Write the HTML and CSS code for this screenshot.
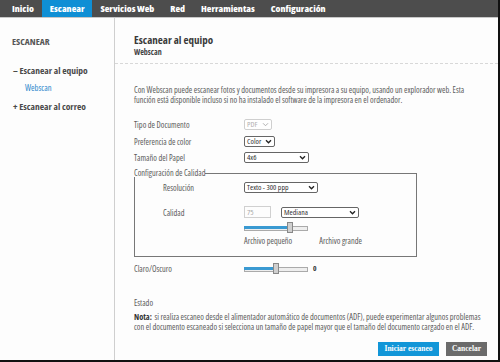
FILE: index.html
```html
<!DOCTYPE html>
<html lang="es">
<head>
<meta charset="utf-8">
<title>Webscan</title>
<link rel="stylesheet" href="styles.css">
</head>
<body>
<div class="frame">
  <nav class="topnav">
    <span class="tab">Inicio</span>
    <span class="tab active">Escanear</span>
    <span class="tab">Servicios Web</span>
    <span class="tab">Red</span>
    <span class="tab">Herramientas</span>
    <span class="tab">Configuración</span>
  </nav>
  <div class="body">
    <aside class="side">
      <div class="side-head">ESCANEAR</div>
      <div class="side-item first">– Escanear al equipo</div>
      <div class="side-sub">Webscan</div>
      <div class="side-item">+ Escanear al correo</div>
    </aside>
    <main class="main">
      <header class="page-head">
        <h1 class="title">Escanear al equipo</h1>
        <div class="subtitle">Webscan</div>
      </header>
      <div class="content">
        <p class="intro">Con Webscan puede escanear fotos y documentos desde su impresora a su equipo, usando un explorador web. Esta función está disponible incluso si no ha instalado el software de la impresora en el ordenador.</p>

        <div class="row r-tipo">
          <span class="label">Tipo de Documento</span>
          <span class="sel disabled w-pdf"><span class="val">PDF</span><svg class="chev" viewBox="0 0 8 6"><path d="M1 1.5 L4 4.5 L7 1.5" /></svg></span>
        </div>
        <div class="row r-color">
          <span class="label">Preferencia de color</span>
          <span class="sel w-color"><span class="val">Color</span><svg class="chev" viewBox="0 0 8 6"><path d="M1 1.5 L4 4.5 L7 1.5" /></svg></span>
        </div>
        <div class="row r-papel">
          <span class="label">Tamaño del Papel</span>
          <span class="sel w-papel"><span class="val">4x6</span><svg class="chev" viewBox="0 0 8 6"><path d="M1 1.5 L4 4.5 L7 1.5" /></svg></span>
        </div>

        <fieldset class="quality">
          <legend class="legend">Configuración de Calidad</legend>
          <div class="qrow q-res">
            <span class="qlabel">Resolución</span>
            <span class="sel w-res"><span class="val">Texto - 300 ppp</span><svg class="chev" viewBox="0 0 8 6"><path d="M1 1.5 L4 4.5 L7 1.5" /></svg></span>
          </div>
          <div class="qrow q-cal">
            <span class="qlabel">Calidad</span>
            <span class="num">75</span>
            <span class="sel w-med"><span class="val">Mediana</span><svg class="chev" viewBox="0 0 8 6"><path d="M1 1.5 L4 4.5 L7 1.5" /></svg></span>
          </div>
          <div class="qslider">
            <div class="slider">
              <span class="fill" style="width: 44px"></span>
              <span class="thumb" style="left: 43px"></span>
            </div>
            <div class="scale">
              <span>Archivo pequeño</span>
              <span>Archivo grande</span>
            </div>
          </div>
        </fieldset>

        <div class="row r-claro">
          <span class="label">Claro/Oscuro</span>
          <div class="slider">
            <span class="fill" style="width: 30px"></span>
            <span class="thumb" style="left: 29px"></span>
          </div>
          <span class="zero">0</span>
        </div>

        <div class="estado">Estado</div>
        <p class="note"><b class="note-key">Nota:</b> si realiza escaneo desde el alimentador automático de documentos (ADF), puede experimentar algunos problemas con el documento escaneado si selecciona un tamaño de papel mayor que el tamaño del documento cargado en el ADF.</p>

        <div class="actions">
          <span class="btn primary">Iniciar escaneo</span>
          <span class="btn secondary">Cancelar</span>
        </div>
      </div>
    </main>
  </div>
</div>
</body>
</html>
```

FILE: styles.css
```css
* { box-sizing: border-box; }
html, body { margin: 0; padding: 0; }
body {
  width: 500px;
  height: 362px;
  background: #fff;
  font-family: "Open Sans", "Liberation Sans", sans-serif;
  font-stretch: 75%;
  color: #5a5a5a;
  overflow: hidden;
}
.frame {
  width: 500px;
  height: 362px;
  border-right: 2px solid #111;
  border-bottom: 2px solid #111;
  display: flex;
  flex-direction: column;
  background: #fdfdfd;
}
.topnav {
  height: 18px;
  flex: none;
  background: #4d4d4d;
  border-bottom: 1px solid #c8c8c8;
  display: flex;
  padding-left: 4px;
}
.tab {
  padding: 0 8px;
  color: #fff;
  font-weight: 800;
  font-size: 9.5px;
  line-height: 17px;
  white-space: nowrap;
}
.tab.active { background: #0f8fd5; min-width: 50px; text-align: center; }

.body { flex: 1; display: flex; min-height: 0; }
.side {
  width: 115px;
  flex: none;
  border-right: 1px solid #cfcfcf;
  padding: 19px 0 0 12px;
}
.side-head {
  font-size: 9.5px;
  font-weight: 700;
  color: #555;
  line-height: 10px;
}
.side-item {
  font-size: 9.5px;
  font-weight: 700;
  color: #4a4a4a;
  line-height: 12px;
  white-space: nowrap;
  padding-left: 1px;
}
.side-item.first { margin-top: 18px; }
.side-sub {
  font-size: 8.5px;
  color: #2a86cc;
  padding-left: 13px;
  line-height: 10px;
  margin: 6px 0 8px;
}

.main { flex: 1; display: flex; flex-direction: column; min-width: 0; }
.page-head {
  padding: 15px 0 0 19px;
  height: 46px;
  flex: none;
  border-bottom: 1px dashed #d8d8d8;
}
.title {
  margin: 0;
  font-size: 11px;
  font-weight: 700;
  color: #3a3a3a;
  line-height: 14px;
}
.subtitle {
  font-size: 8px;
  font-weight: 700;
  color: #444;
  line-height: 10px;
}
.content { padding: 0 14px 0 19px; display: flex; flex-direction: column; }
.intro {
  margin: 21px 0 0;
  font-size: 8.3px;
  line-height: 10px;
}
.row {
  display: flex;
  align-items: center;
  height: 12px;
  flex: none;
}
.label { width: 110px; font-size: 8.3px; flex: none; }
.r-tipo { margin-top: 13px; }
.r-color { margin-top: 5px; }
.r-papel { margin-top: 4px; }

.sel {
  display: inline-flex;
  align-items: center;
  justify-content: space-between;
  height: 11px;
  border: 1px solid #666;
  border-radius: 2px;
  background: #fff;
  padding: 0 2px;
  font-size: 7.8px;
  color: #333;
}
.sel .val { line-height: 9px; }
.sel.disabled { border-color: #cfcfcf; color: #b0b0b0; }
.chev { width: 7px; height: 5px; fill: none; stroke: #222; stroke-width: 1.6; }
.sel.disabled .chev { stroke: #aaa; stroke-width: 1.1; }
.w-pdf { width: 28px; }
.w-color { width: 31px; }
.w-papel { width: 65px; }
.w-res { width: 74px; }
.w-med { width: 78px; margin-left: 10px; }

.quality {
  margin: 6px 0 0;
  padding: 0 0 0 28px;
  width: 283px;
  height: 88px;
  border: 1px solid #777;
  flex: none;
}
.legend {
  padding: 0;
  margin-left: -29px;
  font-size: 8.3px;
  line-height: 8px;
}
.qrow { display: flex; align-items: center; height: 12px; }
.qlabel { width: 81px; font-size: 8.3px; flex: none; }
.q-res { margin-top: 4px; }
.q-cal { margin-top: 13px; }
.num {
  width: 27px;
  height: 12px;
  border: 1px solid #d0d0d0;
  font-size: 7.8px;
  color: #aaa;
  padding-left: 2px;
  line-height: 10px;
}
.qslider { margin-left: 81px; margin-top: 4px; }
.slider {
  position: relative;
  width: 64px;
  height: 11px;
}
.slider::before {
  content: "";
  position: absolute;
  left: 0; right: 0; top: 4px;
  height: 3px;
  border: 1px solid #aaa;
  background: #eee;
}
.fill {
  position: absolute;
  left: 0; top: 4px;
  height: 3px;
  background: #3a9ad2;
}
.thumb {
  position: absolute;
  top: 0;
  width: 6px;
  height: 11px;
  background: #cfcfcf;
  border: 1px solid #888;
}
.scale {
  display: flex;
  gap: 27px;
  font-size: 8.3px;
  line-height: 10px;
  margin-top: 3px;
}
.r-claro { margin-top: 5px; }
.zero { font-size: 7.5px; font-weight: 700; color: #333; margin-left: 5px; }
.estado { font-size: 8.3px; margin-top: 24px; line-height: 10px; }
.note {
  margin: 4px 0 0;
  font-size: 8.3px;
  line-height: 10px;
}
.note-key { color: #333; margin-right: 1px; }
.actions {
  display: flex;
  justify-content: flex-end;
  gap: 7px;
  margin-top: 10px;
  margin-right: -3px;
}
.btn {
  height: 14px;
  line-height: 14px;
  font-size: 7.5px;
  font-weight: bold;
  color: #fff;
  text-align: center;
  font-family: "Liberation Serif", serif;
}
.btn.primary { background: #1296d8; width: 61px; }
.btn.secondary { background: #6b6b6b; width: 41px; }
```
